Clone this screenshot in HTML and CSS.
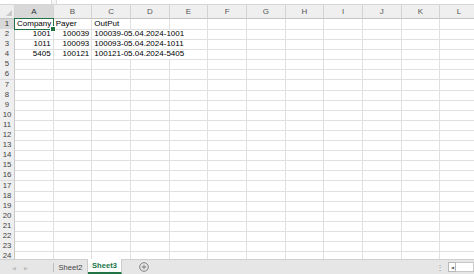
FILE: index.html
```html
<!DOCTYPE html>
<html lang="en">
<head>
  <meta charset="UTF-8">
  <title>Book1 - Sheet3</title>
  <link rel="stylesheet" href="styles.css">
</head>
<body>
  <div class="xl">
    <div class="fx-strip">
      <span class="fx-name"></span>
      <span class="fx-box"></span>
    </div>

    <div class="sheet">
      <div class="row head">
        <span class="corner"><svg width="6" height="6" viewBox="0 0 6 6"><path d="M6 0V6H0Z" fill="#c8c8c8"/></svg></span>
        <span class="sel">A</span><span>B</span><span>C</span><span>D</span><span>E</span><span>F</span>
        <span>G</span><span>H</span><span>I</span><span>J</span><span>K</span><span>L</span>
      </div>

      <div class="row">
        <b class="sel">1</b>
        <span class="active">Company</span><span>Payer</span><span>OutPut</span><span></span><span></span><span></span>
        <span></span><span></span><span></span><span></span><span></span><span></span>
      </div>
      <div class="row">
        <b>2</b>
        <span class="num">1001</span><span class="num">100039</span><span class="wide">100039-05.04.2024-1001</span>
        <span></span><span></span><span></span><span></span><span></span><span></span><span></span>
      </div>
      <div class="row">
        <b>3</b>
        <span class="num">1011</span><span class="num">100093</span><span class="wide">100093-05.04.2024-1011</span>
        <span></span><span></span><span></span><span></span><span></span><span></span><span></span>
      </div>
      <div class="row">
        <b>4</b>
        <span class="num">5405</span><span class="num">100121</span><span class="wide">100121-05.04.2024-5405</span>
        <span></span><span></span><span></span><span></span><span></span><span></span><span></span>
      </div>

      <div class="row"><b>5</b><span></span><span></span><span></span><span></span><span></span><span></span><span></span><span></span><span></span><span></span><span></span><span></span></div>
      <div class="row"><b>6</b><span></span><span></span><span></span><span></span><span></span><span></span><span></span><span></span><span></span><span></span><span></span><span></span></div>
      <div class="row"><b>7</b><span></span><span></span><span></span><span></span><span></span><span></span><span></span><span></span><span></span><span></span><span></span><span></span></div>
      <div class="row"><b>8</b><span></span><span></span><span></span><span></span><span></span><span></span><span></span><span></span><span></span><span></span><span></span><span></span></div>
      <div class="row"><b>9</b><span></span><span></span><span></span><span></span><span></span><span></span><span></span><span></span><span></span><span></span><span></span><span></span></div>
      <div class="row"><b>10</b><span></span><span></span><span></span><span></span><span></span><span></span><span></span><span></span><span></span><span></span><span></span><span></span></div>
      <div class="row"><b>11</b><span></span><span></span><span></span><span></span><span></span><span></span><span></span><span></span><span></span><span></span><span></span><span></span></div>
      <div class="row"><b>12</b><span></span><span></span><span></span><span></span><span></span><span></span><span></span><span></span><span></span><span></span><span></span><span></span></div>
      <div class="row"><b>13</b><span></span><span></span><span></span><span></span><span></span><span></span><span></span><span></span><span></span><span></span><span></span><span></span></div>
      <div class="row"><b>14</b><span></span><span></span><span></span><span></span><span></span><span></span><span></span><span></span><span></span><span></span><span></span><span></span></div>
      <div class="row"><b>15</b><span></span><span></span><span></span><span></span><span></span><span></span><span></span><span></span><span></span><span></span><span></span><span></span></div>
      <div class="row"><b>16</b><span></span><span></span><span></span><span></span><span></span><span></span><span></span><span></span><span></span><span></span><span></span><span></span></div>
      <div class="row"><b>17</b><span></span><span></span><span></span><span></span><span></span><span></span><span></span><span></span><span></span><span></span><span></span><span></span></div>
      <div class="row"><b>18</b><span></span><span></span><span></span><span></span><span></span><span></span><span></span><span></span><span></span><span></span><span></span><span></span></div>
      <div class="row"><b>19</b><span></span><span></span><span></span><span></span><span></span><span></span><span></span><span></span><span></span><span></span><span></span><span></span></div>
      <div class="row"><b>20</b><span></span><span></span><span></span><span></span><span></span><span></span><span></span><span></span><span></span><span></span><span></span><span></span></div>
      <div class="row"><b>21</b><span></span><span></span><span></span><span></span><span></span><span></span><span></span><span></span><span></span><span></span><span></span><span></span></div>
      <div class="row"><b>22</b><span></span><span></span><span></span><span></span><span></span><span></span><span></span><span></span><span></span><span></span><span></span><span></span></div>
      <div class="row"><b>23</b><span></span><span></span><span></span><span></span><span></span><span></span><span></span><span></span><span></span><span></span><span></span><span></span></div>
      <div class="row"><b>24</b><span></span><span></span><span></span><span></span><span></span><span></span><span></span><span></span><span></span><span></span><span></span><span></span></div>
    </div>

    <div class="tabs">
      <div class="nav"><span>&#9664;</span><span>&#9654;</span></div>
      <div class="tab">Sheet2</div>
      <div class="tab on">Sheet3</div>
      <div class="add">
        <svg width="10" height="10" viewBox="0 0 10 10"><circle cx="5" cy="5" r="4.3" fill="none" stroke="#777" stroke-width="0.9"/><path d="M5 2.8V7.2M2.8 5H7.2" stroke="#777" stroke-width="0.9"/></svg>
      </div>
      <div class="spacer"></div>
      <div class="dots">&#8942;</div>
      <div class="hscroll"><span class="hs-btn">&#9664;</span><span class="hs-track"></span></div>
    </div>
  </div>
</body>
</html>
```

FILE: styles.css
```css
* { box-sizing: border-box; }
html, body { margin: 0; background: #fff; }
body { font-family: "Liberation Sans", Arial, sans-serif; font-size: 8px; color: #000; }

.xl { width: 474px; height: 274px; overflow: hidden; display: flex; flex-direction: column; }

/* formula bar remnant */
.fx-strip { height: 5px; display: flex; gap: 4px; background: #f6f6f6; border-bottom: 1px solid #d6d6d6; }
.fx-name { width: 52px; background: #fff; border-right: 1px solid #dcdcdc; }
.fx-box { flex: 1; background: #fff; border-left: 1px solid #dcdcdc; }

/* grid */
.sheet { height: 254px; overflow: hidden; flex: none; }
.row {
  display: grid; grid-template-columns: 15px repeat(12, 38.67px);
  height: 10.1px; line-height: 10px;
}
.row > span { border-right: 1px solid #e0e0e0; border-bottom: 1px solid #e0e0e0; white-space: nowrap; padding: 0 2px; }
.row > b {
  font-weight: normal; text-align: center; color: #444; background: #efefef;
  border-right: 1px solid #c9c9c9; border-bottom: 1px solid #dcdcdc; font-size: 7.8px;
}
.row > b.sel { background: #d8d8d8; color: #333; }

.head { height: 14px; line-height: 13px; }
.head > span { text-align: center; color: #555; background: #efefef; border-right: 1px solid #d3d3d3; border-bottom: 1px solid #c3c3c3; font-size: 8px; }
.head > .corner { display: flex; align-items: flex-end; justify-content: flex-end; padding: 0 2px 2px 0; }
.head > .sel { background: #d8d8d8; color: #333; border-bottom: 1px solid #9a9a9a; }

.num { text-align: right; }
.wide { grid-column: span 3; }

.active { position: relative; }
.active::after {
  content: ""; position: absolute; left: -1px; top: -1px; right: -1px; bottom: -1px;
  border: 1.5px solid #217346;
}
.active::before {
  content: ""; position: absolute; right: -3px; bottom: -3px; width: 4px; height: 4px;
  background: #217346; border: 1px solid #fff; z-index: 1;
}

/* sheet tabs */
.tabs { flex: 1; display: flex; align-items: stretch; background: #e6e6e6; border-top: 1px solid #cfcfcf; font-size: 7.6px; color: #444; }
.nav { width: 54px; display: flex; gap: 8px; align-items: center; padding-left: 12px; color: #c0c0c0; font-size: 5px; border-right: 1px solid #bdbdbd; margin: 3px 0 2px; }
.tab { width: 34px; display: flex; align-items: center; justify-content: center; border-right: 1px solid #cbcbcb; }
.tab.on { background: #fff; color: #217346; font-weight: bold; border-bottom: 2px solid #217346; margin-top: -1px; }
.add { width: 44px; display: flex; align-items: center; justify-content: center; }
.spacer { flex: 1; }
.dots { width: 12px; display: flex; align-items: center; color: #9a9a9a; font-size: 8px; }
.hscroll { width: 26px; display: flex; align-items: center; padding: 2px 0; }
.hs-btn { width: 8px; height: 10px; background: #fff; border: 1px solid #b8b8b8; font-size: 4px; color: #666; display: flex; align-items: center; justify-content: center; }
.hs-track { flex: 1; height: 10px; background: #fff; border: 1px solid #c8c8c8; border-left: none; }
```
